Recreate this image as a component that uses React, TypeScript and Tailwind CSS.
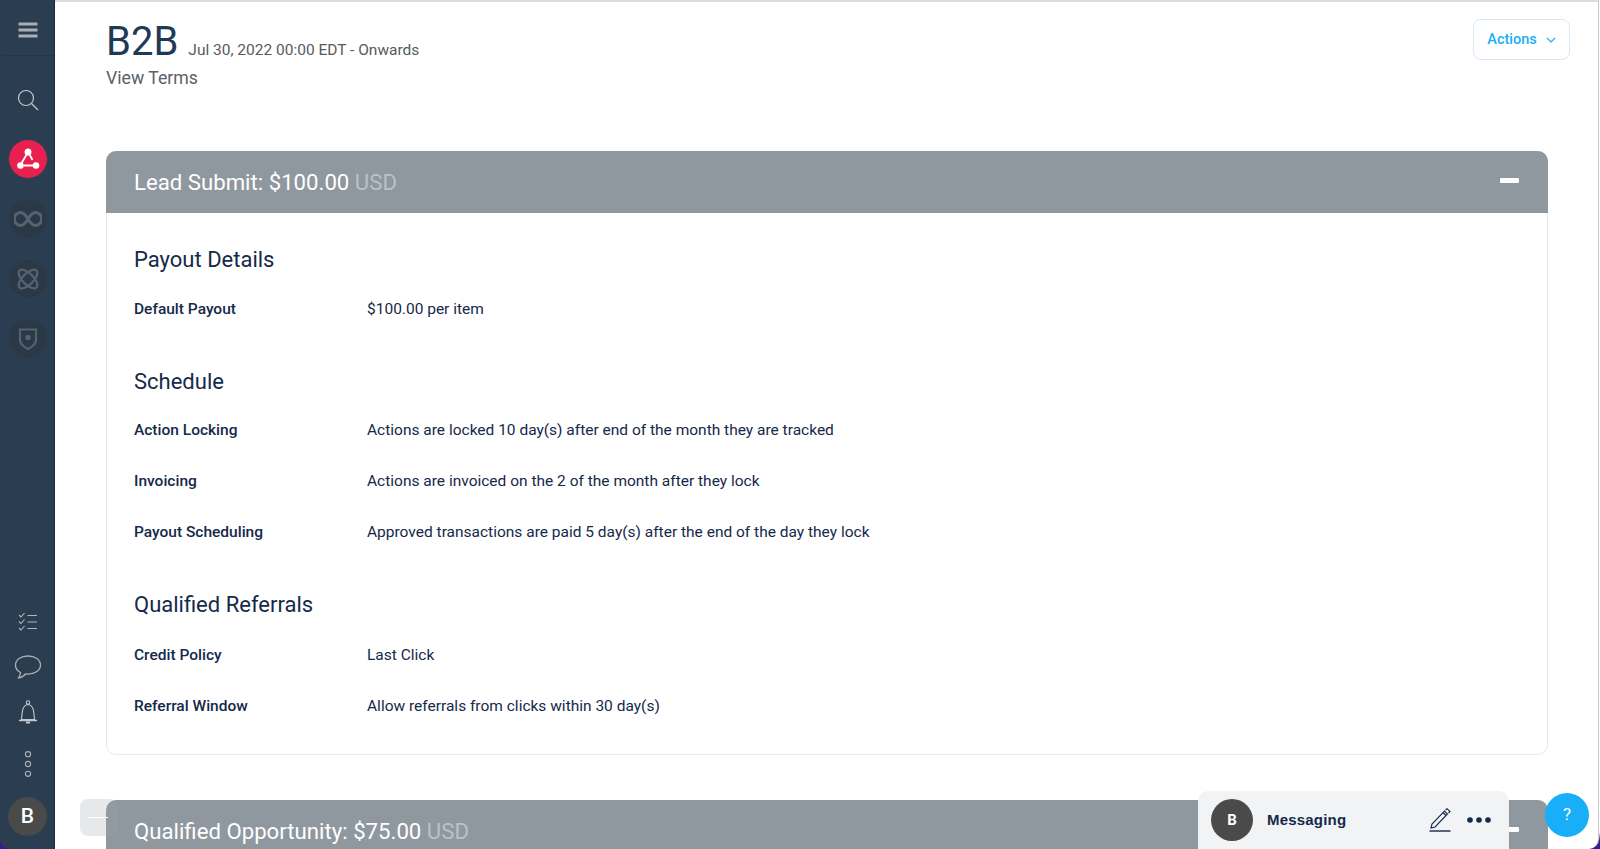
import React from "react";

const font = { fontFamily: "Roboto, 'Liberation Sans', sans-serif" };

function DimCircle({ children }: { children: React.ReactNode }) {
  return (
    <div className="w-[38px] h-[38px] rounded-full bg-[#2b3845] flex items-center justify-center">
      {children}
    </div>
  );
}

function Row({ label, value }: { label: string; value: string }) {
  return (
    <div className="flex h-[51px] items-center text-[15.5px] text-[#15294a]">
      <div className="w-[233px] font-medium shrink-0">{label}</div>
      <div>{value}</div>
    </div>
  );
}

function Section({ title, rows, headClass }: { title: string; rows: [string, string][]; headClass: string }) {
  return (
    <section className="mb-[32px]">
      <h2 className={`text-[22px] leading-[30px] text-[#15294a] ${headClass}`}>{title}</h2>
      {rows.map(([l, v]) => (
        <Row key={l} label={l} value={v} />
      ))}
    </section>
  );
}

function Sidebar() {
  return (
    <aside className="w-[55px] shrink-0 h-full bg-[#2b3d50] border-r border-[#1c2540] flex flex-col items-center pl-[1px] rounded-bl-[10px]">
      <div className="h-[56px] w-full border-b border-[#263645] flex items-center justify-center pt-[5px]">
        <svg width="20" height="16" viewBox="0 0 20 16" fill="#a9b0b5">
          <rect x="0.5" y="0.500" width="19" height="3" />
          <rect x="0.5" y="6.500" width="19" height="3" />
          <rect x="0.5" y="12.500" width="19" height="3" />
        </svg>
      </div>
      <div className="mt-[33px] h-[22px]">
        <svg width="22" height="22" viewBox="0 0 22 22" fill="none" stroke="#c3c8cc" strokeWidth="1.2">
          <circle cx="9" cy="9" r="7.5" />
          <path d="M14.5 14.5 L21 21" />
        </svg>
      </div>
      <div className="mt-[29px] w-[38px] h-[38px] rounded-full bg-[#e8204f] flex items-center justify-center">
        <svg width="24" height="24" viewBox="0 0 24 24" fill="#fff" stroke="#fff" strokeWidth="1.8">
          <circle cx="12" cy="5" r="2.6" />
          <circle cx="4.5" cy="18.5" r="2.4" />
          <circle cx="20" cy="18.5" r="2.4" />
          <path d="M11 7 L5.5 16 M13.5 7.5 L16.500 13 M8 18.5 H17" fill="none" />
        </svg>
      </div>
      <div className="mt-[22px]">
        <DimCircle>
          <svg width="28" height="18" viewBox="0 0 28 18" fill="none" stroke="#55626f" strokeWidth="3">
            <path d="M14 9 C11 4 9 2.500 6.800 2.500 A6.500 6.500 0 0 0 6.800 15.500 C9 15.500 11 14 14 9 C17 4 19 2.500 21.200 2.500 A6.500 6.500 0 0 1 21.200 15.500 C19 15.500 17 14 14 9 Z" />
          </svg>
        </DimCircle>
      </div>
      <div className="mt-[22px]">
        <DimCircle>
          <svg width="24" height="24" viewBox="0 0 24 24" fill="none" stroke="#55626f" strokeWidth="2.200">
            <ellipse cx="12" cy="12" rx="5.500" ry="12" transform="rotate(45 12 12)" />
            <ellipse cx="12" cy="12" rx="5.500" ry="12" transform="rotate(-45 12 12)" />
          </svg>
        </DimCircle>
      </div>
      <div className="mt-[22px]">
        <DimCircle>
          <svg width="20" height="24" viewBox="0 0 20 24" fill="none" stroke="#55626f" strokeWidth="2.200">
            <path d="M2 2.500 H18 V13 C18 17 14 20 10 22 C6 20 2 17 2 13 Z" />
            <circle cx="10" cy="10.500" r="2.700" fill="#55626f" stroke="none" />
          </svg>
        </DimCircle>
      </div>
      <div className="flex-1" />
      <svg width="20" height="19" viewBox="0 0 20 19" fill="none" stroke="#b0b6ba" strokeWidth="1.1" className="mb-[24px]">
        <path d="M1 3 L3 5 L6.500 1 M1 9.500 L3 11.500 L6.500 7.500 M1 16 L3 18 L6.500 14" />
        <path d="M9.500 3.500 H19 M9.500 10 H19 M9.500 16.500 H19" />
      </svg>
      <svg width="28" height="24" viewBox="0 0 28 24" fill="none" stroke="#a9b0b5" strokeWidth="1.300" className="mb-[21px]">
        <path d="M14 1 C7 1 1.500 4.700 1.500 10 C1.500 13.500 3.500 16 6.500 17.500 C6.500 19.500 5.500 21.500 4.500 22.800 C7.500 22.500 10 21 11.500 19 C12.300 19.100 13.100 19.200 14 19.200 C21 19.200 26.500 15.300 26.500 10 C26.500 4.700 21 1 14 1 Z" />
      </svg>
      <svg width="20" height="25" viewBox="0 0 20 25" fill="none" stroke="#c3c8cc" strokeWidth="1.1" className="mb-[26px]">
        <circle cx="10" cy="2.500" r="1.700" />
        <path d="M3.500 19.500 C4 15 3.500 5 10 4.500 C16.500 5 16 15 16.500 19.500 Z" />
        <path d="M1 20.500 H19" strokeWidth="1.500" />
        <path d="M8 22.500 H12" strokeWidth="2" />
      </svg>
      <svg width="8" height="26" viewBox="0 0 8 26" fill="none" stroke="#a9b0b5" strokeWidth="1.100" className="mb-[20px]">
        <circle cx="4" cy="3.200" r="2.600" />
        <circle cx="4" cy="13" r="2.600" />
        <circle cx="4" cy="22.800" r="2.600" />
      </svg>
      <div className="w-[39px] h-[39px] rounded-full bg-[#4a4a4a] text-white text-[21px] font-medium flex items-center justify-center mb-[13px]">B</div>
    </aside>
  );
}

function CardHeader({ title, amount }: { title: string; amount: string }) {
  return (
    <div className="h-[62px] bg-[#8f979f] rounded-t-[10px] flex items-center justify-between pl-[28px] pr-[28px] text-[22.200px]">
      <div className="text-white pt-[2px]">
        {title}: {amount} <span className="text-[#bcc1c6]">USD</span>
      </div>
      <div className="w-[19px] h-[5px] rounded-[1px] bg-white mb-[4px] mr-[1px]" />
    </div>
  );
}

export default function App() {
  return (
    <div style={font} className="relative w-[1600px] h-[849px] overflow-hidden bg-[linear-gradient(to_bottom,#ffffff_98%,#3b1a8a_99%)] flex">
      <Sidebar />
      <main className="flex-1 bg-white border-t-2 border-t-[#dcdcdc] border-r border-r-[#c8c8c8] mr-[1px] rounded-br-[10px] pl-[51px] pr-[50px] overflow-hidden">
        <header className="relative h-[149px] pt-[17px]">
          <div className="flex items-baseline">
            <h1 className="text-[40px] leading-[46px] text-[#1e3a56]">B2B</h1>
            <span className="ml-[10px] text-[15.500px] text-[#555b61]">Jul 30, 2022 00:00 EDT - Onwards</span>
          </div>
          <div className="text-[17.700px] leading-[24px] text-[#5b6167] mt-[1px]">View Terms</div>
          <button className="absolute right-[-22px] top-[17px] w-[97px] h-[41px] rounded-[8px] border border-[#d8e8f8] bg-white flex items-center justify-center gap-[9px] text-[14.500px] font-medium text-[#1aaef5]">
            Actions
            <svg width="10" height="6" viewBox="0 0 10 6" fill="none" stroke="#1aaef5" strokeWidth="1.200">
              <path d="M1 1 L5 5 L9 1" />
            </svg>
          </button>
        </header>

        <div className="border border-[#e6e8ea] rounded-[10px] h-[604px]">
          <div className="-m-px">
            <CardHeader title="Lead Submit" amount="$100.00" />
          </div>
          <div className="pl-[27px] pt-[33px]">
            <Section title="Payout Details" headClass="mb-[9px]" rows={[["Default Payout", "$100.00 per item"]]} />
            <Section
              title="Schedule"
              headClass="mb-[8px]"
              rows={[
                ["Action Locking", "Actions are locked 10 day(s) after end of the month they are tracked"],
                ["Invoicing", "Actions are invoiced on the 2 of the month after they lock"],
                ["Payout Scheduling", "Approved transactions are paid 5 day(s) after the end of the day they lock"],
              ]}
            />
            <Section
              title="Qualified Referrals"
              headClass="mb-[10px]"
              rows={[
                ["Credit Policy", "Last Click"],
                ["Referral Window", "Allow referrals from clicks within 30 day(s)"],
              ]}
            />
          </div>
        </div>

        <div className="mt-[45px]">
          <CardHeader title="Qualified Opportunity" amount="$75.00" />
        </div>
      </main>

      <div className="absolute left-[80px] top-[799px] w-[38px] h-[37px] rounded-[8px] bg-[#9aa3ad]/25 flex items-center pl-[8px]">
        <div className="w-[20px] h-px bg-white" />
      </div>

      <div className="absolute left-[1198px] top-[791px] w-[311px] h-[58px] rounded-t-[10px] bg-[#f1f3f5] flex items-center pl-[13px] pr-[18px]">
        <div className="w-[42px] h-[42px] rounded-full bg-[#4a4a4a] text-white text-[15px] font-bold flex items-center justify-center">B</div>
        <div className="ml-[14px] text-[15px] text-[#15294a] tracking-[0.2px] flex-1 font-bold" style={{ fontFamily: "'Liberation Sans', sans-serif" }}>Messaging</div>
        <svg width="22" height="24" viewBox="0 0 22 24" fill="none" stroke="#15294a" strokeWidth="1.100" className="mr-[16px]">
          <path d="M3 16 L2 20 L6 19 L18.500 6 L15.500 3 Z M14 4.500 L17 7.500 M16.500 2 L18 .7 L21 3.500 L19.500 5" />
          <path d="M0.500 23 H21.500" strokeWidth="1.400" />
        </svg>
        <svg width="24" height="6" viewBox="0 0 24 6" fill="#15294a">
          <circle cx="3" cy="3" r="2.800" />
          <circle cx="12" cy="3" r="2.800" />
          <circle cx="21" cy="3" r="2.800" />
        </svg>
      </div>

      <div className="absolute left-[1545px] top-[793px] w-[44px] h-[44px] rounded-full bg-[#18aef8] text-white text-[17px] flex items-center justify-center">?</div>
    </div>
  );
}
